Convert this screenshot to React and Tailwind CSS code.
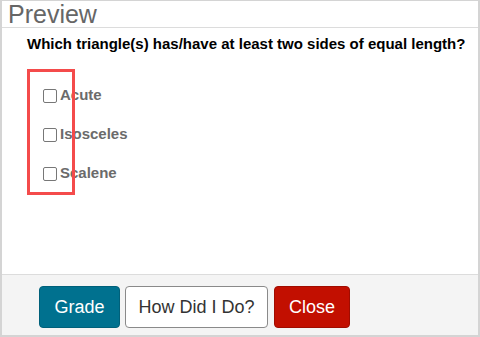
export default function App() {
  const items = ["Acute", "Isosceles", "Scalene"];
  return (
    <div className="w-[480px] h-[337px] flex flex-col bg-white border-x-2 border-b-2 border-t border-[#d4d4d4] overflow-hidden" style={{ fontFamily: '"Liberation Sans", Arial, sans-serif' }}>
      <div className="h-[27px] shrink-0 border-b border-[#dcdcdc] pl-[6px] pt-[1px]">
        <div className="text-[25px] leading-[25px] text-[#666666]">Preview</div>
      </div>
      <div className="flex-1 relative">
        <div className="pl-[25px] pt-[7px] text-[15px] font-bold text-black leading-[17px]">
          Which triangle(s) has/have at least two sides of equal length?
        </div>
        <div className="absolute left-[25px] top-[41px] w-[48px] h-[126px] border-[3px] border-[#f44b4b]"></div>
        <div className="pl-[41px] pt-[35px] flex flex-col gap-[22px]">
          {items.map((t) => (
            <label key={t} className="flex items-center h-[17px]">
              <span className="w-[14px] h-[14px] border border-[#777777] rounded-[2px] bg-white"></span>
              <span className="ml-[3px] text-[15px] font-bold text-[#6b6b6b]">{t}</span>
            </label>
          ))}
        </div>
      </div>
      <div className="h-[61px] shrink-0 border-t border-[#dcdcdc] bg-[#f4f4f4] pl-[37px] pt-[11px] flex gap-[5px] items-start">
        <button className="w-[81px] h-[42px] rounded-[4px] bg-[#00718f] text-white text-[18px] border border-[#00607a]">Grade</button>
        <button className="w-[143px] h-[42px] rounded-[4px] bg-white text-[#333333] text-[18px] border border-[#8a8a8a]">How Did I Do?</button>
        <button className="w-[76px] h-[42px] rounded-[4px] bg-[#c20f00] text-white text-[18px] border border-[#a00c00] ml-[1px]">Close</button>
      </div>
    </div>
  );
}
